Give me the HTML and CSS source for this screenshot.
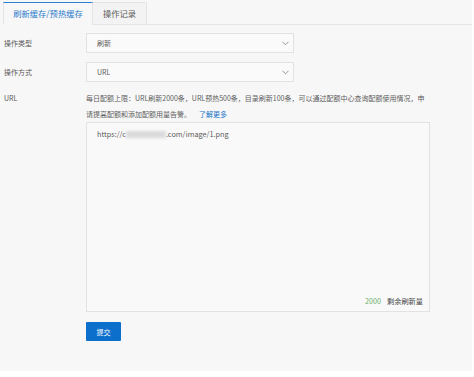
FILE: index.html
```html
<!DOCTYPE html>
<html lang="zh-CN">
<head>
<meta charset="utf-8">
<title>刷新缓存</title>
<link rel="stylesheet" href="styles.css">
</head>
<body>
<div class="page">
  <div class="tabs">
    <div class="tab active">刷新缓存/预热缓存</div>
    <div class="tab">操作记录</div>
    <div class="tab-rest"></div>
  </div>
  <div class="form">
    <div class="row row-select">
      <div class="label">操作类型</div>
      <div class="select">
        <span>刷新</span>
        <svg class="chev" width="7" height="5" viewBox="0 0 7 5"><polyline points="0.5,0.8 3.5,3.8 6.5,0.8" fill="none" stroke="#8a8a8a" stroke-width="0.9"/></svg>
      </div>
    </div>
    <div class="row row-select">
      <div class="label">操作方式</div>
      <div class="select">
        <span>URL</span>
        <svg class="chev" width="7" height="5" viewBox="0 0 7 5"><polyline points="0.5,0.8 3.5,3.8 6.5,0.8" fill="none" stroke="#8a8a8a" stroke-width="0.9"/></svg>
      </div>
    </div>
    <div class="row row-url">
      <div class="label">URL</div>
      <div class="field">
        <div class="desc">每日配额上限：URL刷新2000条，URL预热500条，目录刷新100条，可以通过配额中心查询配额使用情况，申<br>请提高配额和添加配额用量告警。<a class="more">了解更多</a></div>
        <div class="textarea">
          <div class="url-text">https://c<span class="masked"></span>.com/image/1.png</div>
          <div class="counter"><span class="num">2000</span><span class="unit">剩余刷新量</span></div>
        </div>
        <button class="submit">提交</button>
      </div>
    </div>
  </div>
</div>
</body>
</html>
```
FILE: styles.css
```css
html, body {
  margin: 0;
  padding: 0;
  background: #ffffff;
}
body {
  font-family: "Noto Sans CJK SC", "Noto Sans", sans-serif;
  color: #5a5a5a;
}
.page {
  width: 472px;
  height: 371px;
  background: #f7f7f7;
  box-sizing: border-box;
  padding-top: 2px;
}
.tabs {
  display: flex;
  padding-left: 3px;
  height: 23px;
  box-sizing: border-box;
}
.tab {
  height: 23px;
  box-sizing: border-box;
  font-size: 8.3px;
  line-height: 21px;
  text-align: center;
  border: 1px solid #e4e4e4;
  border-left: none;
  background: #f3f3f3;
  color: #5a5a5a;
}
.tab.active {
  width: 90px;
  border-left: 1px solid #e4e4e4;
  border-top: 1px solid #2b7fd0;
  border-bottom: 1px solid #f7f7f7;
  background: #f7f7f7;
  color: #2a7ccc;
}
.tab:nth-child(2) {
  width: 54px;
}
.tab-rest {
  flex: 1;
  border-bottom: 1px solid #e4e4e4;
}
.form {
  padding-left: 4px;
  padding-top: 8px;
}
.row {
  display: flex;
}
.label {
  width: 82px;
  flex: none;
  font-size: 7px;
  color: #5a5a5a;
}
.row-select {
  height: 20px;
  align-items: center;
  margin-bottom: 9px;
}
.select {
  width: 208px;
  height: 20px;
  box-sizing: border-box;
  border: 1px solid #e2e2e2;
  background: #fafafa;
  display: flex;
  align-items: center;
  justify-content: space-between;
  padding: 0 4px 0 10px;
  font-size: 7px;
  color: #5a5a5a;
}
.chev {
  display: block;
}
.row-url {
  margin-top: 2px;
}
.row-url .label {
  line-height: 15.5px;
}
.field {
  display: flex;
  flex-direction: column;
  align-items: flex-start;
}
.desc {
  font-size: 7px;
  line-height: 15.5px;
  color: #5e5e5e;
  white-space: nowrap;
}
.more {
  color: #1a73c9;
  margin-left: 8px;
}
.textarea {
  width: 344px;
  height: 190px;
  box-sizing: border-box;
  border: 1px solid #e2e2e2;
  background: #f9f9f9;
  display: flex;
  flex-direction: column;
  padding: 3px 6px 3px 10px;
}
.url-text {
  font-size: 7.3px;
  line-height: 16px;
  color: #5a5a5a;
  display: flex;
  align-items: center;
}
.masked {
  display: inline-block;
  width: 40px;
  height: 7px;
  background: #dadada;
  filter: blur(1.5px);
}
.counter {
  margin-top: auto;
  align-self: flex-end;
  font-size: 7.2px;
  line-height: 14px;
}
.num {
  color: #6cb06c;
  margin-right: 6px;
}
.unit {
  color: #444;
}
.submit {
  margin-top: 10px;
  width: 35px;
  height: 19px;
  border: none;
  background: #0b6fcb;
  color: #ffffff;
  font-family: "Noto Sans CJK SC", sans-serif;
  font-size: 7px;
  padding: 0;
  border-radius: 1px;
}
```
